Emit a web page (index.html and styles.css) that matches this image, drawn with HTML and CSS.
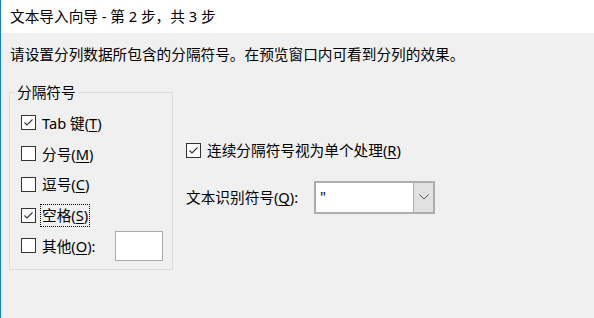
FILE: index.html
```html
<!DOCTYPE html>
<html lang="zh-CN">
<head>
    <meta charset="UTF-8">
    <meta name="viewport" content="width=device-width, initial-scale=1.0">
    <title>文本导入向导</title>
    <link rel="stylesheet" href="styles.css">
</head>
<body>

<div class="window">
    <div class="titlebar">文本导入向导 - 第 2 步，共 3 步</div>

    <div class="content">
        <p class="intro">请设置分列数据所包含的分隔符号。在预览窗口内可看到分列的效果。</p>

        <div class="options">
            <fieldset class="group">
                <legend>分隔符号</legend>

                <label class="check_row">
                    <span class="box"><svg viewBox="0 0 13 13"><polyline points="2.5,6.5 5,9 10.5,3.5"/></svg></span>
                    <span class="text">Tab 键(<u>T</u>)</span>
                </label>
                <label class="check_row">
                    <span class="box"></span>
                    <span class="text">分号(<u>M</u>)</span>
                </label>
                <label class="check_row">
                    <span class="box"></span>
                    <span class="text">逗号(<u>C</u>)</span>
                </label>
                <label class="check_row">
                    <span class="box"><svg viewBox="0 0 13 13"><polyline points="2.5,6.5 5,9 10.5,3.5"/></svg></span>
                    <span class="text focused">空格(<u>S</u>)</span>
                </label>
                <label class="check_row">
                    <span class="box"></span>
                    <span class="text">其他(<u>O</u>):</span>
                    <span class="other_input"></span>
                </label>
            </fieldset>

            <div class="side">
                <label class="check_row">
                    <span class="box"><svg viewBox="0 0 13 13"><polyline points="2.5,6.5 5,9 10.5,3.5"/></svg></span>
                    <span class="text">连续分隔符号视为单个处理(<u>R</u>)</span>
                </label>

                <div class="qualifier_row">
                    <span class="qualifier_label">文本识别符号(<u>Q</u>):</span>
                    <div class="combo">
                        <span class="combo_value">"</span>
                        <span class="combo_button"><svg viewBox="0 0 10 6"><polyline points="0.5,0.5 5,5 9.5,0.5"/></svg></span>
                    </div>
                </div>
            </div>
        </div>
    </div>
</div>

</body>
</html>
```

FILE: styles.css
```css
html, body {
    height: 100%;
}

body {
    margin: 0;
    font-family: "Noto Sans", "Noto Sans CJK SC", sans-serif;
    font-size: 14.67px;
    color: #000000;
    background: #F0F0F0;
}

.window {
    height: 100%;
    display: flex;
    flex-direction: column;
    border-left: 1px solid #1380D8;
    box-sizing: border-box;
}

.titlebar {
    background: #FFFFFF;
    height: 33px;
    line-height: 33px;
    padding-left: 9px;
}

.content {
    flex: 1;
    padding-top: 11px;
}

.intro {
    margin: 0 0 0 9px;
    line-height: 20px;
}

.options {
    display: flex;
    align-items: flex-start;
    margin-top: 18px;
    margin-left: 8px;
}

/* Group box */
.group {
    width: 164px;
    box-sizing: border-box;
    margin: 0;
    padding: 5.5px 9px 8px 11px;
    border: 1px solid #DCDCDC;
}

.group legend {
    padding: 0 2px;
    margin-left: -6px;
    line-height: 20px;
}

.check_row {
    display: flex;
    align-items: center;
    height: 30.75px;
}

.box {
    width: 13px;
    height: 13px;
    border: 1px solid #333333;
    background: #FFFFFF;
    flex-shrink: 0;
}

.box svg {
    display: block;
    width: 13px;
    height: 13px;
    fill: none;
    stroke: #333333;
    stroke-width: 1.1;
}

.text {
    margin-left: 6px;
    line-height: 20px;
    white-space: nowrap;
}

.text u {
    text-underline-offset: 2px;
}

.focused {
    border: 1px dotted #000000;
    line-height: 21px;
    padding: 0 1px;
    margin-left: 4px;
}

.other_input {
    margin-left: auto;
    width: 46px;
    height: 28px;
    border: 1px solid #A9A9A9;
    background: #FFFFFF;
}

/* Right column */
.side {
    margin-left: 13px;
    margin-top: 53px;
}

.qualifier_row {
    display: flex;
    align-items: center;
    margin-top: 15px;
}

.qualifier_label {
    width: 128px;
    line-height: 20px;
}

.qualifier_label u {
    text-underline-offset: 2px;
}

.combo {
    width: 121px;
    height: 33px;
    box-sizing: border-box;
    border: 2px solid #ADADAD;
    background: #FFFFFF;
    display: flex;
}

.combo_value {
    flex: 1;
    padding-left: 4px;
    line-height: 26px;
}

.combo_button {
    width: 19px;
    border-left: 1px solid #ADADAD;
    background: #E1E1E1;
    display: flex;
    align-items: center;
    justify-content: center;
}

.combo_button svg {
    width: 10px;
    height: 6px;
    fill: none;
    stroke: #555555;
    stroke-width: 1;
}
```
